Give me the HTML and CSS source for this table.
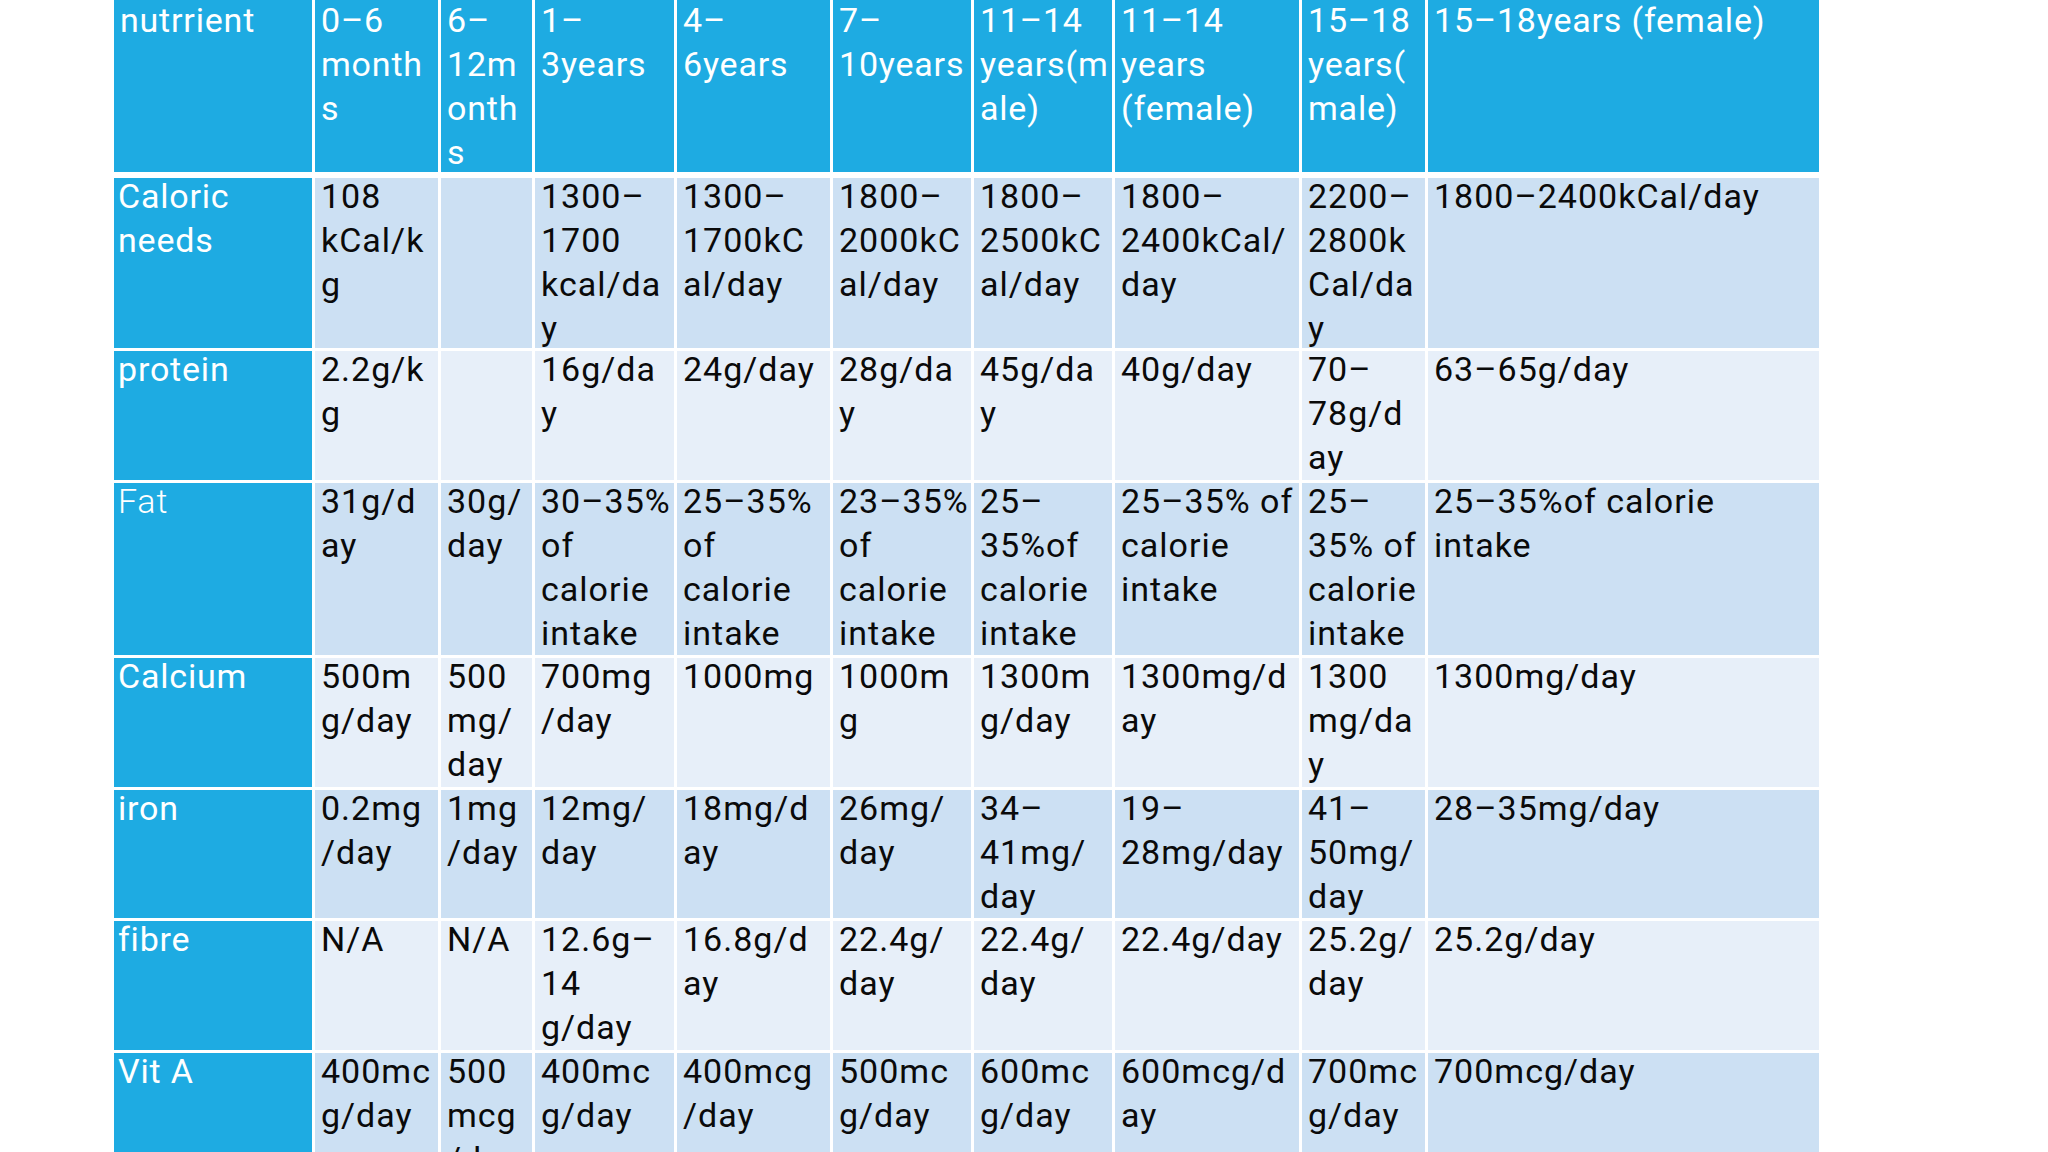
FILE: index.html
```html
<!DOCTYPE html>
<html lang="en">
<head>
<meta charset="utf-8">
<title>Nutrient requirements</title>
<link rel="stylesheet" href="styles.css">
</head>
<body>
<div class="table">
  <div class="c hd"><div class="t">nutrrient</div></div>
  <div class="c hd"><div class="t">0–6<br>month<br>s</div></div>
  <div class="c hd"><div class="t">6–<br>12m<br>onth<br>s</div></div>
  <div class="c hd"><div class="t">1–<br>3years</div></div>
  <div class="c hd"><div class="t">4–<br>6years</div></div>
  <div class="c hd"><div class="t">7–<br>10years</div></div>
  <div class="c hd"><div class="t">11–14<br>years(m<br>ale)</div></div>
  <div class="c hd"><div class="t">11–14<br>years<br>(female)</div></div>
  <div class="c hd"><div class="t">15–18<br>years(<br>male)</div></div>
  <div class="c hd"><div class="t">15–18years (female)</div></div>

  <div class="c lab"><div class="t">Caloric<br>needs</div></div>
  <div class="c odd"><div class="t">108<br>kCal/k<br>g</div></div>
  <div class="c odd"><div class="t"></div></div>
  <div class="c odd"><div class="t">1300–<br>1700<br>kcal/da<br>y</div></div>
  <div class="c odd"><div class="t">1300–<br>1700kC<br>al/day</div></div>
  <div class="c odd"><div class="t">1800–<br>2000kC<br>al/day</div></div>
  <div class="c odd"><div class="t">1800–<br>2500kC<br>al/day</div></div>
  <div class="c odd"><div class="t">1800–<br>2400kCal/<br>day</div></div>
  <div class="c odd"><div class="t">2200–<br>2800k<br>Cal/da<br>y</div></div>
  <div class="c odd"><div class="t">1800–2400kCal/day</div></div>

  <div class="c lab"><div class="t">protein</div></div>
  <div class="c even"><div class="t">2.2g/k<br>g</div></div>
  <div class="c even"><div class="t"></div></div>
  <div class="c even"><div class="t">16g/da<br>y</div></div>
  <div class="c even"><div class="t">24g/day</div></div>
  <div class="c even"><div class="t">28g/da<br>y</div></div>
  <div class="c even"><div class="t">45g/da<br>y</div></div>
  <div class="c even"><div class="t">40g/day</div></div>
  <div class="c even"><div class="t">70–<br>78g/d<br>ay</div></div>
  <div class="c even"><div class="t">63–65g/day</div></div>

  <div class="c lab light"><div class="t">Fat</div></div>
  <div class="c odd"><div class="t">31g/d<br>ay</div></div>
  <div class="c odd"><div class="t">30g/<br>day</div></div>
  <div class="c odd"><div class="t">30–35%<br>of<br>calorie<br>intake</div></div>
  <div class="c odd"><div class="t">25–35%<br>of<br>calorie<br>intake</div></div>
  <div class="c odd"><div class="t">23–35%<br>of<br>calorie<br>intake</div></div>
  <div class="c odd"><div class="t">25–<br>35%of<br>calorie<br>intake</div></div>
  <div class="c odd"><div class="t">25–35% of<br>calorie<br>intake</div></div>
  <div class="c odd"><div class="t">25–<br>35% of<br>calorie<br>intake</div></div>
  <div class="c odd"><div class="t">25–35%of calorie<br>intake</div></div>

  <div class="c lab"><div class="t">Calcium</div></div>
  <div class="c even"><div class="t">500m<br>g/day</div></div>
  <div class="c even"><div class="t">500<br>mg/<br>day</div></div>
  <div class="c even"><div class="t">700mg<br>/day</div></div>
  <div class="c even"><div class="t">1000mg</div></div>
  <div class="c even"><div class="t">1000m<br>g</div></div>
  <div class="c even"><div class="t">1300m<br>g/day</div></div>
  <div class="c even"><div class="t">1300mg/d<br>ay</div></div>
  <div class="c even"><div class="t">1300<br>mg/da<br>y</div></div>
  <div class="c even"><div class="t">1300mg/day</div></div>

  <div class="c lab"><div class="t">iron</div></div>
  <div class="c odd"><div class="t">0.2mg<br>/day</div></div>
  <div class="c odd"><div class="t">1mg<br>/day</div></div>
  <div class="c odd"><div class="t">12mg/<br>day</div></div>
  <div class="c odd"><div class="t">18mg/d<br>ay</div></div>
  <div class="c odd"><div class="t">26mg/<br>day</div></div>
  <div class="c odd"><div class="t">34–<br>41mg/<br>day</div></div>
  <div class="c odd"><div class="t">19–<br>28mg/day</div></div>
  <div class="c odd"><div class="t">41–<br>50mg/<br>day</div></div>
  <div class="c odd"><div class="t">28–35mg/day</div></div>

  <div class="c lab"><div class="t">fibre</div></div>
  <div class="c even"><div class="t">N/A</div></div>
  <div class="c even"><div class="t">N/A</div></div>
  <div class="c even"><div class="t">12.6g–<br>14<br>g/day</div></div>
  <div class="c even"><div class="t">16.8g/d<br>ay</div></div>
  <div class="c even"><div class="t">22.4g/<br>day</div></div>
  <div class="c even"><div class="t">22.4g/<br>day</div></div>
  <div class="c even"><div class="t">22.4g/day</div></div>
  <div class="c even"><div class="t">25.2g/<br>day</div></div>
  <div class="c even"><div class="t">25.2g/day</div></div>

  <div class="c lab"><div class="t">Vit A</div></div>
  <div class="c odd"><div class="t">400mc<br>g/day</div></div>
  <div class="c odd"><div class="t">500<br>mcg<br>/day</div></div>
  <div class="c odd"><div class="t">400mc<br>g/day</div></div>
  <div class="c odd"><div class="t">400mcg<br>/day</div></div>
  <div class="c odd"><div class="t">500mc<br>g/day</div></div>
  <div class="c odd"><div class="t">600mc<br>g/day</div></div>
  <div class="c odd"><div class="t">600mcg/d<br>ay</div></div>
  <div class="c odd"><div class="t">700mc<br>g/day</div></div>
  <div class="c odd"><div class="t">700mcg/day</div></div>
</div>
</body>
</html>
```
FILE: styles.css
```css
html, body {
  margin: 0;
  padding: 0;
  background: #ffffff;
  height: 1152px;
  overflow: hidden;
}

body {
  font-family: Roboto, "Liberation Sans", sans-serif;
  font-size: 34px;
  color: #0a0a0a;
}

.table {
  display: grid;
  margin-left: 114px;
  width: 1705px;
  grid-template-columns: 198px 123px 91px 139px 153px 138px 138px 184px 123px 391px;
  grid-template-rows: 175px 170px 129px 172px 129px 128px 129px 130px;
  column-gap: 3px;
  row-gap: 3px;
  background: #ffffff;
}

.c {
  padding: 0 5px 0 6px;
  white-space: nowrap;
  overflow: visible;
  min-width: 0;
}

.t {
  line-height: 44px;
  margin-top: -4px;
  letter-spacing: 1px;
}

.hd {
  background: #1eabe2;
  color: #ffffff;
  font-weight: 400;
  margin-bottom: 3px;
}

.hd .t {
  letter-spacing: 0.8px;
  margin-top: -2px;
}

.lab {
  background: #1eabe2;
  color: #ffffff;
  font-weight: 400;
  padding-left: 4px;
}

.lab .t {
  letter-spacing: 0.8px;
}

.lab.light {
  font-weight: 300;
}

.odd {
  background: #cce0f3;
}

.even {
  background: #e7eff9;
}
```
